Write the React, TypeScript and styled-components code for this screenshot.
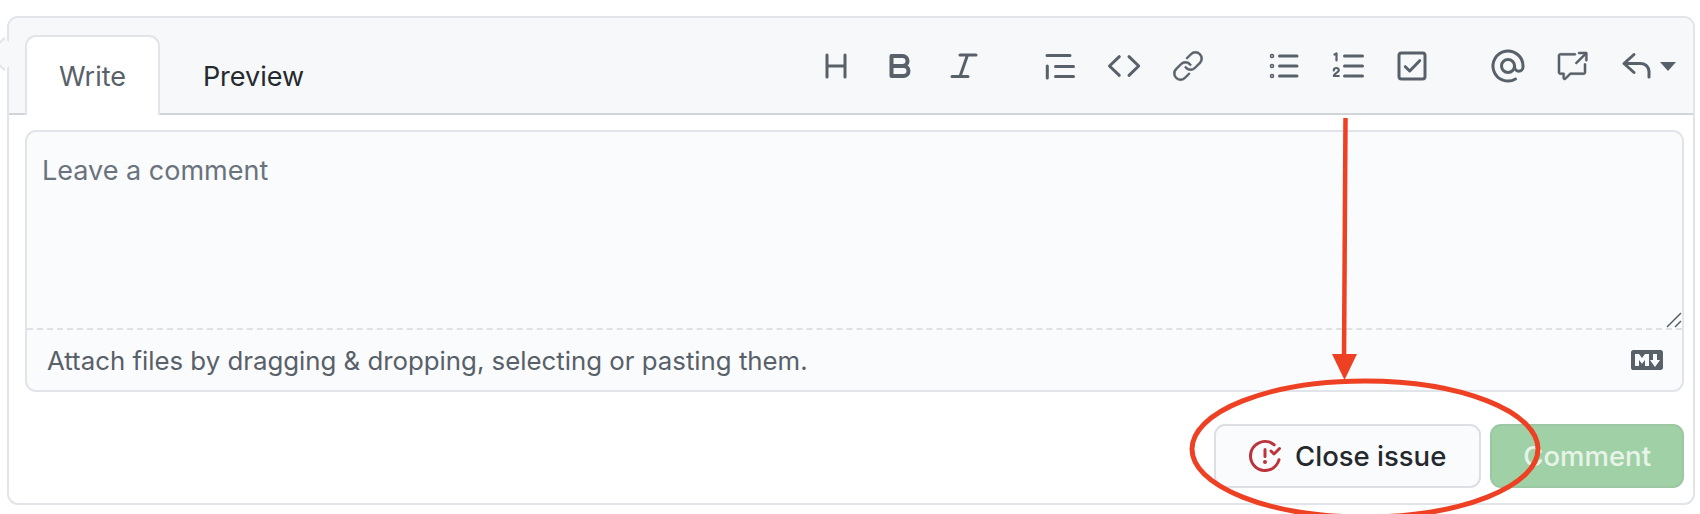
import React from 'react';
import styled, { createGlobalStyle } from 'styled-components';
import { GoCrossReference, GoLink } from 'react-icons/go';

const GlobalStyle = createGlobalStyle`
  html, body {
    margin: 0;
    padding: 0;
    background: #fff;
    font-family: Inter, "Liberation Sans", sans-serif;
  }
`;

const Page = styled.div`
  position: relative;
  width: 1700px;
  height: 514px;
  box-sizing: border-box;
  padding: 16px 5px 0 7px;
  overflow: hidden;
`;

const CommentBox = styled.div`
  position: relative;
  height: 489px;
  box-sizing: border-box;
  border: 2px solid #e1e4e8;
  border-radius: 11px;
  background: #fff;

  &::before {
    content: '';
    position: absolute;
    left: -17px;
    top: 24px;
    width: 22px;
    height: 22px;
    background: #f6f8fa;
    border: 2px solid #e1e4e8;
    border-width: 0 0 2px 2px;
    transform: rotate(45deg);
  }
`;

const Header = styled.div`
  position: relative;
  display: flex;
  align-items: flex-end;
  height: 97px;
  box-sizing: border-box;
  padding: 16px 9px 0 16px;
  background: #f6f8fa;
  border-bottom: 2px solid #d1d5da;
  border-radius: 9px 9px 0 0;
`;

const Tab = styled.div<{ $active?: boolean }>`
  width: ${(p) => (p.$active ? '135px' : '187px')};
  height: 80px;
  margin-bottom: -2px;
  box-sizing: border-box;
  display: flex;
  align-items: center;
  justify-content: center;
  font-size: 27px;
  color: ${(p) => (p.$active ? '#586069' : '#24292e')};
  background: ${(p) => (p.$active ? '#fff' : 'transparent')};
  border: 2px solid ${(p) => (p.$active ? '#e1e4e8' : 'transparent')};
  border-bottom: 0;
  border-radius: 11px 11px 0 0;
`;

const Toolbar = styled.div`
  margin-left: auto;
  align-self: stretch;
  display: flex;
  align-items: flex-start;
  gap: 32px;
`;

const ToolGroup = styled.div`
  display: flex;
`;

const ToolButton = styled.div<{ $wide?: boolean }>`
  width: ${(p) => (p.$wide ? '80px' : '64px')};
  height: 64px;
  display: flex;
  align-items: center;
  gap: 4px;
  justify-content: ${(p) => (p.$wide ? 'flex-start' : 'center')};
  padding-left: ${(p) => (p.$wide ? '12px' : '0')};
  box-sizing: border-box;
  color: #586069;
  flex: none;
`;

const StrokeIcon = styled.svg`
  width: 40px;
  height: 40px;
  flex: none;
  fill: none;
  stroke: currentColor;
  stroke-width: 3;
  stroke-linecap: round;
  stroke-linejoin: round;
`;

const PackIcon = styled.span`
  display: flex;

  svg {
    width: 32px;
    height: 32px;
    fill: currentColor;
    stroke: currentColor;
    stroke-width: 0.4;
  }
`;

const Caret = styled.span`
  width: 0;
  height: 0;
  border: 8px solid transparent;
  border-top: 9px solid #586069;
  border-bottom: 0;
`;

const Body = styled.div`
  padding: 15px 9px 0 16px;
`;

const Editor = styled.div`
  height: 262px;
  box-sizing: border-box;
  display: flex;
  flex-direction: column;
  border: 2px solid #e1e4e8;
  border-radius: 11px;
  background: #fafbfc;
`;

const InputArea = styled.div`
  position: relative;
  flex: 1;
  padding: 19px 15px;
  font-size: 27px;
  line-height: 40px;
  color: #6a737d;
  border-bottom: 2px dashed #dfe2e5;
`;

const ResizeGrip = styled.svg`
  position: absolute;
  right: 0;
  bottom: 0;
  width: 16px;
  height: 16px;
  stroke: #586069;
  stroke-width: 1.5;
  fill: none;
`;

const AttachBar = styled.div`
  height: 60px;
  display: flex;
  align-items: center;
  justify-content: space-between;
  padding: 0 19px 0 20px;
  font-size: 25.8px;
  color: #586069;

  svg {
    width: 32px;
    height: 32px;
    fill: #586069;
  }
`;

const Actions = styled.div`
  display: flex;
  justify-content: flex-end;
  gap: 9px;
  margin-top: 32px;
`;

const ActionButton = styled.div<{ $primary?: boolean }>`
  height: 64px;
  box-sizing: border-box;
  display: flex;
  align-items: center;
  gap: 14px;
  padding: 0 ${(p) => (p.$primary ? '31px' : '33px')};
  font-size: 27.5px;
  font-weight: 500;
  border-radius: 11px;
  border: 2px solid ${(p) => (p.$primary ? '#9bc7a3' : '#dcdfe3')};
  color: ${(p) => (p.$primary ? '#e8f4ea' : '#24292e')};
  background: ${(p) => (p.$primary ? '#a0d0a6' : '#fafbfc')};

  svg {
    width: 32px;
    height: 32px;
    fill: #bd333c;
    flex: none;
  }
`;

const Annotation = styled.svg`
  position: absolute;
  left: 0;
  top: 0;
  width: 1700px;
  height: 514px;
  pointer-events: none;
`;

const IssueCloseIcon = () => (
  <svg viewBox="0 0 16 16">
    <path
      fillRule="evenodd"
      d="M1.500 8a6.500 6.500 0 0 1 10.650-5 .75.75 0 0 0 .96-1.150A8 8 0 1 0 15.700 10.170a.75.75 0 1 0-1.440-.4A6.500 6.500 0 0 1 1.500 8zM8 12a1 1 0 1 0 0-2 1 1 0 0 0 0 2zm0-8a.75.75 0 0 1 .75.75v3.500a.75.75 0 0 1-1.500 0v-3.500A.75.75 0 0 1 8 4zm7.780.78a.75.75 0 0 0-1.060-1.060L12.500 5.940l-.97-.97a.75.75 0 0 0-1.060 1.060l1.500 1.500c.3.3.77.3 1.060 0z"
    />
  </svg>
);

const MarkdownIcon = () => (
  <svg viewBox="0 0 16 16">
    <path d="M14.85 3c.63 0 1.15.52 1.14 1.15v7.7c0 .63-.51 1.15-1.15 1.15H1.15C.52 13 0 12.48 0 11.84V4.15C0 3.52.52 3 1.15 3ZM9 11V5H7L5.5 7 4 5H2v6h2V8l1.5 1.92L7 8v3Zm2.99.5L14.5 8H13V5h-2v3H9.5Z" />
  </svg>
);

// toolbar glyphs, drawn on a 40px box to follow the older octicons in the shot
const glyph = (d: string, extra?: React.ReactNode, width?: number) => (
  <StrokeIcon viewBox="0 0 40 40" style={width ? { strokeWidth: width } : undefined}>
    <path d={d} />
    {extra}
  </StrokeIcon>
);

const dots = (
  <>
    <circle cx="8" cy="10" r="0.8" />
    <circle cx="8" cy="20" r="0.8" />
    <circle cx="8" cy="30" r="0.8" />
  </>
);

const numerals = (
  <path d="M6.500 8.500 8.500 7.500V14.500M5.800 24.500a2.500 2.500 0 0 1 5 0c0 2-5 3-5 5.500h5" strokeWidth="2.200" />
);

const toolGroups: React.ReactNode[][] = [
  [
    glyph('M11 9V31M29 9V31M11 20H29'),
    glyph('M11.500 10H22.500a4.800 4.800 0 0 1 0 10H11.500ZM11.500 20H23.500a5 5 0 0 1 0 10H11.500Z', undefined, 4),
    glyph('M16 9H32M8 30.500H24M23.500 9 16 30.500'),
  ],
  [
    glyph('M7 9.500H30M15.500 20.500H33.500M15.500 30.500H33.500M7.300 20V32'),
    glyph('M15.300 10.700 5.500 20 15.300 29.300M25 10.700 34.700 20 25 29.300'),
    <PackIcon><GoLink /></PackIcon>,
  ],
  [
    glyph('M15.500 10H33M15.500 20H33M15.500 30H33', dots),
    glyph('M16.500 10H34.500M16.500 20H34.500M16.500 30H34.500', numerals),
    glyph(
      'M13.300 20.700 17.700 25 27.700 14.700',
      <rect x="7" y="7" width="26" height="26" rx="2.500" />,
    ),
  ],
];

export default function App() {
  return (
    <Page>
      <GlobalStyle />
      <CommentBox>
        <Header>
          <Tab $active>Write</Tab>
          <Tab>Preview</Tab>
          <Toolbar>
            {toolGroups.map((group, i) => (
              <ToolGroup key={i}>
                {group.map((icon, j) => (
                  <ToolButton key={j}>{icon}</ToolButton>
                ))}
              </ToolGroup>
            ))}
            <ToolGroup>
              <ToolButton>
                {glyph('M27.500 33A15 15 0 1 1 35 20v1a4.200 4.200 0 0 1-8.400 0v-1', <circle cx="20" cy="20" r="6.500" />)}
              </ToolButton>
              <ToolButton>
                <PackIcon><GoCrossReference /></PackIcon>
              </ToolButton>
              <ToolButton $wide>
                {glyph('M8 17.500H25a8 8 0 0 1 8 8V31M18 8.500 8 17.500 18 26.500')}
                <Caret />
              </ToolButton>
            </ToolGroup>
          </Toolbar>
        </Header>
        <Body>
          <Editor>
            <InputArea>
              Leave a comment
              <ResizeGrip viewBox="0 0 16 16">
                <path d="M1 15 15 1M9 15l6-6" />
              </ResizeGrip>
            </InputArea>
            <AttachBar>
              Attach files by dragging &amp; dropping, selecting or pasting them.
              <MarkdownIcon />
            </AttachBar>
          </Editor>
          <Actions>
            <ActionButton>
              <IssueCloseIcon />
              Close issue
            </ActionButton>
            <ActionButton $primary>Comment</ActionButton>
          </Actions>
        </Body>
      </CommentBox>
      <Annotation viewBox="0 0 1700 514">
        <path d="M1345.500 118 1344 362" stroke="#ee4023" strokeWidth="4.500" fill="none" />
        <path d="M1332 354h25l-12.500 26z" fill="#ee4023" />
        <ellipse cx="1365" cy="449" rx="173" ry="68" fill="none" stroke="#ee4023" strokeWidth="5" />
      </Annotation>
    </Page>
  );
}
